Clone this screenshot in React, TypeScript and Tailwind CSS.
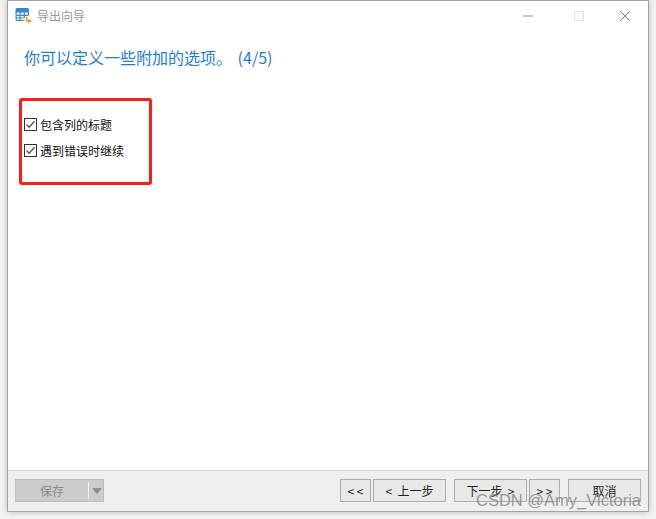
import React from 'react';

const FONT = "font-['Microsoft_YaHei','Noto_Sans_CJK_SC','Liberation_Sans',sans-serif]";

const WizardIcon = () => (
  <svg width="18" height="18" viewBox="0 0 18 18" fill="none">
    <path d="M0.5 2.5A1.5 1.5 0 0 1 2 1h10.5A1.5 1.5 0 0 1 14 2.5V5.5H0.5z" fill="#3d85c6" />
    <path d="M1.1 5v7.5a1 1 0 0 0 1 1H9.5M13.4 5v3.5" stroke="#3d85c6" strokeWidth="1.2" />
    <path d="M1.1 8.3h12M1.1 11h7.5M5 5v8.5M9.3 5v6" stroke="#3d85c6" strokeWidth="1.2" />
    <path d="M11.5 10v2.5a1.5 1.5 0 0 0 1.5 1.5h1" stroke="#f39c12" strokeWidth="1.8" />
    <path d="M13.5 11.5 17 14l-3.5 2.5z" fill="#f39c12" />
  </svg>
);

const Check = ({ label }: { label: string }) => (
  <div className="flex items-center gap-[3px] h-[13px]">
    <div className="flex w-[13px] h-[13px] items-center justify-center border border-[#333333] bg-white">
      <svg width="11" height="11" viewBox="0 0 11 11" fill="none">
        <path d="M1.5 5.5 4.2 8.3 9.5 2.2" stroke="#555555" strokeWidth="1.3" />
      </svg>
    </div>
    <span className="text-[12px] leading-[13px] text-[#111111]">{label}</span>
  </div>
);

const Btn = ({ label, w }: { label: string; w: string }) => (
  <button className={`h-[23px] ${w} border border-[#adadad] bg-[#e8e8e8] text-[12px] leading-none text-[#222222] whitespace-pre`}>
    {label}
  </button>
);

export default function App() {
  return (
    <div className={`relative w-[656px] h-[519px] overflow-hidden bg-[#f4f4f4] ${FONT}`}>
      <div className="ml-[7px] flex h-[512px] w-[642px] flex-col border border-[#a3a3a3] bg-white shadow-[0_0_6px_rgba(0,0,0,0.25)]">
        {/* 标题栏 */}
        <div className="flex h-[30px] items-center pl-[7px]">
          <WizardIcon />
          <span className="ml-[4px] text-[12px] text-[#9a9a9a]">导出向导</span>
          <div className="ml-auto flex items-center">
            <svg width="12" height="12" viewBox="0 0 12 12" className="mr-[39px]">
              <path d="M1 6h10" stroke="#8c8c8c" />
            </svg>
            <svg width="12" height="12" viewBox="0 0 12 12" className="mr-[34px]">
              <rect x="1.5" y="1.5" width="9" height="9" fill="none" stroke="#e2e2e2" />
            </svg>
            <svg width="12" height="12" viewBox="0 0 12 12" className="mr-[17px]">
              <path d="M1 1l10 10M11 1 1 11" stroke="#7d7d7d" />
            </svg>
          </div>
        </div>

        {/* 内容 */}
        <div className="flex-1 pl-[16px]">
          <h1 className="mt-[14px] h-[24px] text-[16px] font-normal leading-[24px] text-[#1b7ed6]">
            你可以定义一些附加的选项。 <span className="ml-[2px]">(4/5)</span>
          </h1>
          <div className="mt-[49px] flex flex-col gap-[13px]">
            <Check label="包含列的标题" />
            <Check label="遇到错误时继续" />
          </div>
        </div>

        {/* 底部按钮 */}
        <div className="flex h-[41px] items-start border-t border-[#d4d4d4] bg-[#efefef] pl-[7px] pt-[8px]">
          <div className="flex h-[23px] w-[89px] items-center border border-[#bdbdbd] bg-[#cccccc]">
            <span className="w-[72px] text-center text-[12px] text-[#8a8a8a]">保存</span>
            <div className="h-[17px] w-px bg-[#f2f2f2]" />
            <div className="ml-[3px] h-0 w-0 border-x-[5px] border-t-[6px] border-x-transparent border-t-[#8f8f8f]" />
          </div>
          <div className="ml-auto flex pr-[7px]">
            <Btn label="< <" w="w-[31px]" />
            <Btn label="<  上一步" w="ml-[2px] w-[73px]" />
            <Btn label="下一步  >" w="ml-[8px] w-[73px]" />
            <Btn label="> >" w="ml-[2px] w-[31px]" />
            <Btn label="取消" w="ml-[8px] w-[73px]" />
          </div>
        </div>
      </div>

      {/* 红色标注框 */}
      <div className="absolute left-[19px] top-[98px] h-[87px] w-[133px] rounded-[3px] border-[3px] border-[#fa1e14]" />

      {/* 水印 */}
      <span className="absolute left-[476px] top-[490px] text-[16.5px] leading-[20px] text-[#808080]/80 font-['Liberation_Sans',sans-serif]">
        CSDN @Amy_Victoria
      </span>
    </div>
  );
}
